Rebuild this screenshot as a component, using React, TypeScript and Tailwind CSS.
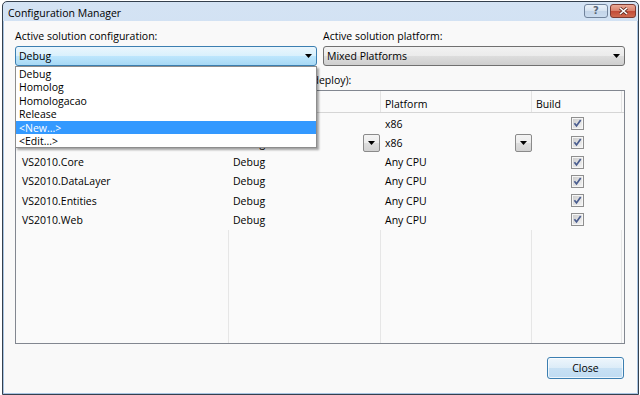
import React from "react";

function Arrow() {
  return (
    <svg width="7" height="4" viewBox="0 0 7 4" className="block">
      <polygon points="0,0 7,0 3.5,4" fill="#000" />
    </svg>
  );
}

function Check() {
  return (
    <svg width="13" height="13" viewBox="0 0 13 13" className="block">
      <defs>
        <linearGradient id="cbf" x1="0" y1="0" x2="1" y2="1">
          <stop offset="0" stopColor="#cdcdcd" />
          <stop offset="1" stopColor="#f2f2f2" />
        </linearGradient>
      </defs>
      <rect x="0.5" y="0.5" width="12" height="12" fill="#f6f6f6" stroke="#8f8f8f" />
      <rect x="2" y="2" width="9" height="9" fill="url(#cbf)" />
      <path d="M3.4 6.3 L5.5 8.9 L9.7 2.9" stroke="#4a5d8f" strokeWidth="1.7" fill="none" />
    </svg>
  );
}

function CellButton() {
  return (
    <div className="w-[17px] h-[18px] border border-[#8a8a8a] rounded-[2px] bg-[linear-gradient(#f4f4f4_0%,#ececec_50%,#dedede_50%,#d2d2d2_100%)] flex items-center justify-center">
      <Arrow />
    </div>
  );
}

const rows = [
  { p: "VS2010.Business", c: "Debug", pl: "x86", edit: false },
  { p: "VS2010.Console", c: "Debug", pl: "x86", edit: true },
  { p: "VS2010.Core", c: "Debug", pl: "Any CPU", edit: false },
  { p: "VS2010.DataLayer", c: "Debug", pl: "Any CPU", edit: false },
  { p: "VS2010.Entities", c: "Debug", pl: "Any CPU", edit: false },
  { p: "VS2010.Web", c: "Debug", pl: "Any CPU", edit: false },
];

const items = ["Debug", "Homolog", "Homologacao", "Release", "<New...>", "<Edit...>"];

export default function App() {
  return (
    <div className="w-[640px] h-[395px] bg-white pl-[2px] pt-[1px] font-['Open_Sans',sans-serif] text-[10.5px] text-black overflow-hidden">
      <div className="w-[637px] h-[394px] border border-[#34404e] rounded-t-[5px] flex flex-col bg-[linear-gradient(#d4e3f4,#bcd2eb)]">
        {/* Title bar */}
        <div className="h-[19px] flex justify-between items-start pl-[5px] pr-[2px]">
          <div className="pt-[3px] leading-[16px] text-[10.5px]">Configuration Manager</div>
          <div className="flex pt-[2px] gap-[2px]">
            <div className="w-[24px] h-[14px] rounded-[3px] border border-[#71839b] bg-[linear-gradient(#eaf1f9_0%,#d6e2f0_50%,#c3d4e8_50%,#cbdcef_100%)] flex items-center justify-center">
              <span className="text-[10px] leading-[10px] font-bold text-[#5a6676] font-['DejaVu_Sans',sans-serif]">?</span>
            </div>
            <div className="w-[26px] h-[14px] rounded-[3px] border border-[#7d3a31] bg-[linear-gradient(#e9a996_0%,#d9806b_50%,#c24a36_50%,#cf6a4f_100%)] flex items-center justify-center">
              <svg width="11" height="8" viewBox="0 0 11 8" className="block">
                <path d="M2 1 L9 7 M9 1 L2 7" stroke="#5b2a22" strokeWidth="3" />
                <path d="M2 1 L9 7 M9 1 L2 7" stroke="#ffffff" strokeWidth="1.6" />
              </svg>
            </div>
          </div>
        </div>

        {/* Client */}
        <div className="flex-1 border-l border-r border-b border-[#a9c4e2] bg-[#f9f9f9] pl-[11px] pt-[7px] flex flex-col">
          <div className="grid grid-cols-[302px_302px] gap-x-[6px]">
            <div className="leading-[16px]">Active solution configuration:</div>
            <div className="leading-[16px]">Active solution platform:</div>
            <div className="relative mt-[2px]">
              <div className="h-[20px] rounded-[3px] border border-[#3c7fb1] bg-[linear-gradient(#eaf6fd_0%,#d9f0fc_50%,#bee6fd_50%,#a7d9f5_100%)] flex items-center justify-between pl-[3px] pr-[4px]">
                <span className="leading-[16px]">Debug</span>
                <Arrow />
              </div>
              <div className="absolute left-0 top-full w-[302px] z-10 bg-white border border-[#8d8d8d] shadow-[2px_2px_2px_rgba(0,0,0,0.35)]">
                {items.map((it, i) => (
                  <div
                    key={it}
                    className={
                      i === 4
                        ? "h-[13.4px] leading-[13.4px] pt-[1px] pl-[3px] bg-[#3399ff] text-white"
                        : "h-[13.4px] leading-[13.4px] pt-[1px] pl-[3px]"
                    }
                  >
                    {it}
                  </div>
                ))}
              </div>
            </div>
            <div className="mt-[2px] h-[20px] rounded-[3px] border border-[#707070] bg-[linear-gradient(#f2f2f2_0%,#ebebeb_50%,#dddddd_50%,#cfcfcf_100%)] flex items-center justify-between pl-[3px] pr-[4px]">
              <span className="leading-[16px]">Mixed Platforms</span>
              <Arrow />
            </div>
          </div>

          <div className="mt-[7px] leading-[15px] whitespace-nowrap">
            Project contexts (check the project configurations to build or deploy):
          </div>

          {/* Grid */}
          <div className="mt-[2px] w-[610px] h-[254px] border border-[#828790] bg-[#fafafa] flex flex-col">
            <div className="h-[22px] border-b border-[#d5d5d5] flex shrink-0">
              <div className="w-[213px] border-r border-[#e3e3e3] pl-[6px] pt-[5px] leading-[16px]">Project</div>
              <div className="w-[152px] border-r border-[#e3e3e3] pl-[4px] pt-[5px] leading-[16px]">Configuration</div>
              <div className="w-[151px] border-r border-[#e3e3e3] pl-[4px] pt-[5px] leading-[16px]">Platform</div>
              <div className="w-[90px] border-r border-[#e3e3e3] pl-[4px] pt-[5px] leading-[16px]">Build</div>
            </div>
            <div className="pt-[1px] flex flex-col shrink-0">
              {rows.map((r) => (
                <div key={r.p} className="h-[19.25px] flex items-center">
                  <div className="w-[213px] pl-[6px] leading-[16px]">{r.p}</div>
                  <div className="w-[152px] pl-[4px] pr-[1px] flex items-center justify-between">
                    <span className="leading-[16px]">{r.c}</span>
                    {r.edit && <CellButton />}
                  </div>
                  <div className="w-[151px] pl-[4px] pr-[0px] flex items-center justify-between">
                    <span className="leading-[16px]">{r.pl}</span>
                    {r.edit && <CellButton />}
                  </div>
                  <div className="w-[90px] flex justify-center">
                    <Check />
                  </div>
                </div>
              ))}
            </div>
            <div className="flex-1 flex">
              <div className="w-[213px] border-r border-[#e6e6e6]" />
              <div className="w-[152px] border-r border-[#e6e6e6]" />
              <div className="w-[151px] border-r border-[#e6e6e6]" />
              <div className="w-[90px] border-r border-[#e6e6e6]" />
            </div>
          </div>

          <div className="w-[610px] flex justify-end mt-[13px] pr-[1px]">
            <div className="w-[77px] h-[22px] rounded-[3px] border border-[#3c7fb1] bg-[linear-gradient(#eef6fc_0%,#dcecf8_50%,#c8e1f4_50%,#c0dcf2_100%)] shadow-[inset_0_0_0_1px_rgba(255,255,255,0.7)] flex items-center justify-center leading-[16px]">
              Close
            </div>
          </div>
        </div>
      </div>
    </div>
  );
}
